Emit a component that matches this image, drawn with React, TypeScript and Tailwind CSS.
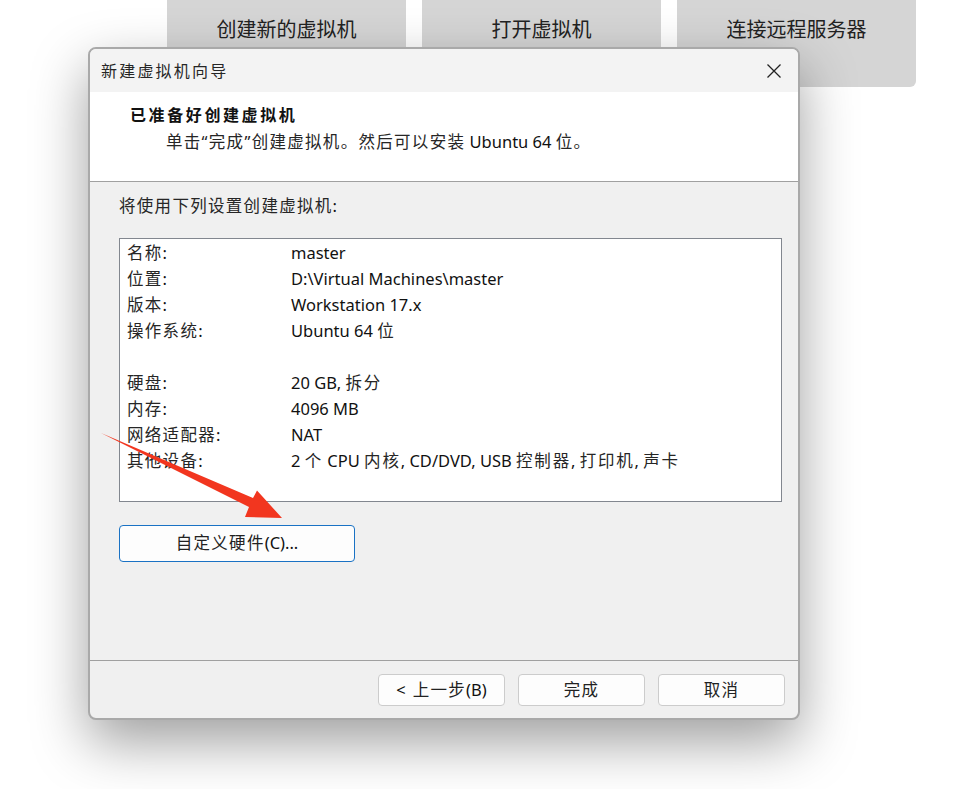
import React from "react";

const CJK = /([\u3000-\u303f\u4e00-\u9fff\uff00-\uffef\u201c\u201d]+)/;

// splits text so CJK runs get their own letter spacing
function T({ s, cjk = "tracking-[1.3px]" }: { s: string; cjk?: string }) {
  const parts = s.split(CJK).filter((p) => p !== "");
  return (
    <>
      {parts.map((p, i) =>
        CJK.test(p) ? (
          <span key={i} className={cjk}>
            {p}
          </span>
        ) : (
          <span key={i} className="whitespace-pre text-[#111]">
            {p}
          </span>
        )
      )}
    </>
  );
}

const rows: [string, string][] = [
  ["名称:", "master"],
  ["位置:", "D:\\Virtual Machines\\master"],
  ["版本:", "Workstation 17.x"],
  ["操作系统:", "Ubuntu 64 位"],
  ["", ""],
  ["硬盘:", "20 GB, 拆分"],
  ["内存:", "4096 MB"],
  ["网络适配器:", "NAT"],
  ["其他设备:", "2 个 CPU 内核, CD/DVD, USB 控制器, 打印机, 声卡"],
];

const topCards = ["创建新的虚拟机", "打开虚拟机", "连接远程服务器"];

export default function App() {
  return (
    <div className="relative w-[967px] h-[789px] overflow-hidden bg-white text-[#262626] font-['Noto_Sans','Noto_Sans_CJK_SC',sans-serif]">
      {/* cards behind the dialog */}
      <div className="flex gap-4 pl-[167px]">
        {topCards.map((c) => (
          <div
            key={c}
            className="w-[239px] h-[87px] bg-[#d5d5d5] rounded-b-md flex justify-center pt-[16px] text-[20px] leading-[28px] text-[#222]"
          >
            {c}
          </div>
        ))}
      </div>

      {/* dialog */}
      <div className="absolute left-[88px] top-[47px] w-[712px] h-[673px] flex flex-col rounded-lg border-2 border-[#a9a9a9] bg-[#f0f0f0] shadow-[0_22px_55px_rgba(0,0,0,0.38)] overflow-hidden">
        <div className="h-[43px] shrink-0 bg-[#f3f3f3] flex items-center justify-between pl-[11px] pr-[16px]">
          <span className="text-[16px] tracking-[2.2px]">新建虚拟机向导</span>
          <svg width="16" height="16" viewBox="0 0 16 16" className="text-[#222]">
            <path d="M1.5 1.5 L14.5 14.5 M14.5 1.5 L1.5 14.5" stroke="currentColor" strokeWidth="1.3" />
          </svg>
        </div>

        <div className="h-[90px] shrink-0 bg-white border-b border-[#a0a0a0] pl-[40px] pt-[11px]">
          <div className="text-[16px] leading-[24px] font-bold tracking-[2.6px] text-[#111]">已准备好创建虚拟机</div>
          <div className="pl-[36px] mt-[3px] text-[16.5px] leading-[24px]">
            <T s="单击“完成”创建虚拟机。然后可以安装 Ubuntu 64 位。" />
          </div>
        </div>

        <div className="h-[478px] shrink-0 px-[29px] pt-[12px]">
          <div className="text-[16.5px] leading-[24px]">
            <T s="将使用下列设置创建虚拟机:" />
          </div>
          <div className="mt-[20px] w-[663px] h-[264px] border border-[#82878f] bg-white pl-[7px] pt-[1px]">
            {rows.map(([k, v], i) => (
              <div key={i} className="flex h-[26px] items-center text-[16.5px]">
                <div className="w-[164px] shrink-0">
                  <T s={k} />
                </div>
                <div>
                  <T s={v} cjk="tracking-[1.8px]" />
                </div>
              </div>
            ))}
          </div>
          <button className="mt-[23px] w-[236px] h-[37px] rounded-[4px] border border-[#1a72c4] bg-[#fdfdfd] text-[16.5px] text-[#222]">
            <T s="自定义硬件(C)..." />
          </button>
        </div>

        <div className="flex-1 border-t border-[#a0a0a0] flex justify-end gap-[13px] pt-[13px] pr-[13px]">
          <button className="w-[127px] h-[32px] rounded-[4px] border border-[#cccccc] bg-[#fdfdfd] text-[16.5px] text-[#222]">
            <span className="text-[#111]">&lt;</span>
            <span className="ml-[7px] tracking-[1.3px]">上一步</span>
            <span className="text-[#111]">(B)</span>
          </button>
          {["完成", "取消"].map((b) => (
            <button
              key={b}
              className="w-[127px] h-[32px] rounded-[4px] border border-[#cccccc] bg-[#fdfdfd] text-[16.5px] text-[#222] tracking-[1.3px]"
            >
              {b}
            </button>
          ))}
        </div>
      </div>

      {/* red annotation arrow */}
      <svg className="absolute left-0 top-0 pointer-events-none" width="967" height="789" viewBox="0 0 967 789">
        <polygon
          points="101,433 253,498 257,490.5 282,518 245,517 249,507"
          fill="#f2361f"
        />
      </svg>
    </div>
  );
}
